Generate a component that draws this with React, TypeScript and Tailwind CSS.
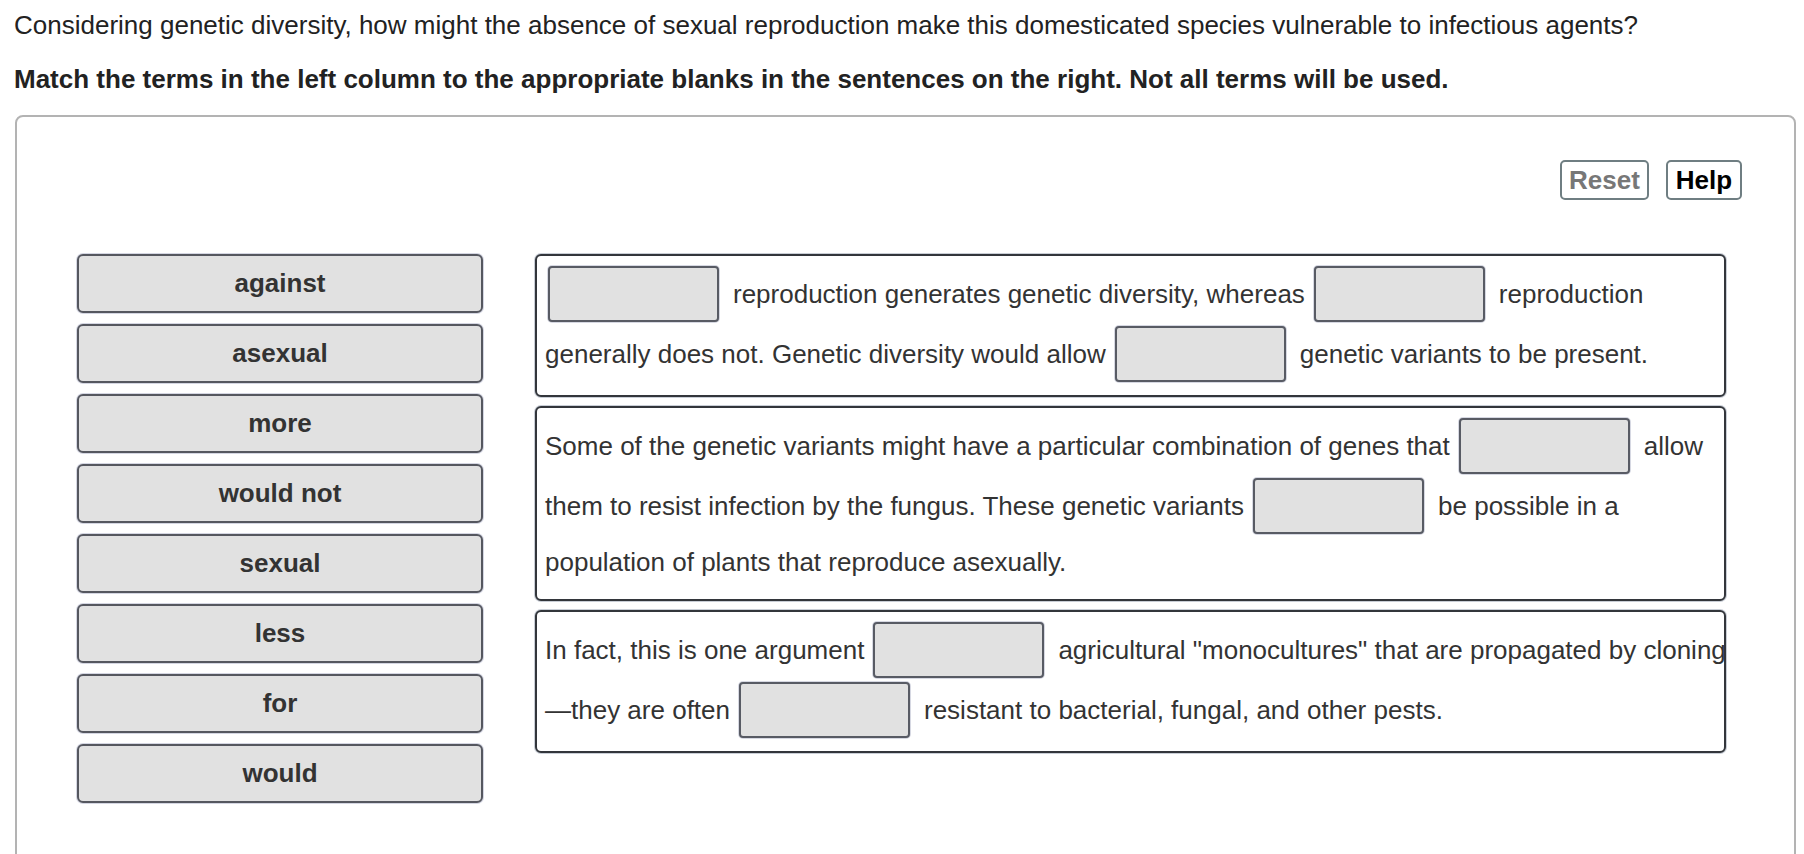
const terms = ["against", "asexual", "more", "would not", "sexual", "less", "for", "would"];

type Part = string | { blank: true };

const B: Part = { blank: true };

const sentences: { lines: Part[][] }[] = [
  {
    lines: [
      [B, "reproduction generates genetic diversity, whereas", B, "reproduction"],
      ["generally does not. Genetic diversity would allow", B, "genetic variants to be present."],
    ],
  },
  {
    lines: [
      ["Some of the genetic variants might have a particular combination of genes that", B, "allow"],
      ["them to resist infection by the fungus. These genetic variants", B, "be possible in a"],
      ["population of plants that reproduce asexually."],
    ],
  },
  {
    lines: [
      ["In fact, this is one argument", B, 'agricultural "monocultures" that are propagated by cloning'],
      ["\u2014they are often", B, "resistant to bacterial, fungal, and other pests."],
    ],
  },
];

function Blank({ first }: { first: boolean }) {
  return (
    <span
      className={`inline-block h-[56px] w-[171px] shrink-0 rounded-[4px] border-2 border-[#585b64] bg-[#e1e1e1] shadow-[0_0_0_1px_#d6d8e2] ${
        first ? "ml-[3px] mr-[14px]" : "ml-[9px] mr-[14px]"
      }`}
    />
  );
}

function SentenceBox({ lines }: { lines: Part[][] }) {
  return (
    <div className="rounded-[6px] border-2 border-[#33363b] bg-white pb-[11px] pl-[8px] pt-[8px] shadow-[0_0_0_1px_#c9ced6]">
      {lines.map((line, i) => {
        const hasBlank = line.some((p) => typeof p !== "string");
        return (
          <div
            key={i}
            className={`flex items-center whitespace-nowrap ${hasBlank ? "h-[60px]" : "h-[52px]"}`}
          >
            {line.map((p, j) =>
              typeof p === "string" ? <span key={j}>{p}</span> : <Blank key={j} first={j === 0} />
            )}
          </div>
        );
      })}
    </div>
  );
}

export default function App() {
  return (
    <div
      className="min-h-screen bg-white pl-[14px] pr-[8px] pt-[10px] text-[26px] text-[#333]"
      style={{ fontFamily: '"Liberation Sans", Arial, Helvetica, sans-serif' }}
    >
      <p className="leading-[30px] text-[#222]">
        Considering genetic diversity, how might the absence of sexual reproduction make this domesticated species
        vulnerable to infectious agents?
      </p>
      <p className="mt-[24px] font-bold leading-[30px] text-[#222]">
        Match the terms in the left column to the appropriate blanks in the sentences on the right. Not all terms will
        be used.
      </p>

      <div className="ml-[1px] mt-[21px] h-[780px] rounded-[8px] border-2 border-[#b3b3b3]">
        <div className="mr-[52px] mt-[43px] flex justify-end gap-[17px]">
          <button
            type="button"
            className="h-[40px] w-[89px] rounded-[5px] border-2 border-[#6f7e82] bg-white text-[26px] font-bold leading-none text-[#777]"
          >
            Reset
          </button>
          <button
            type="button"
            className="h-[40px] w-[76px] rounded-[5px] border-2 border-[#6f7e82] bg-white text-[26px] font-bold leading-none text-black"
          >
            Help
          </button>
        </div>

        <div className="mt-[54px] flex items-start gap-[52px] pl-[60px]">
          <div className="flex w-[406px] flex-col gap-[11px]">
            {terms.map((t) => (
              <div
                key={t}
                className="flex h-[59px] items-center justify-center rounded-[6px] border-2 border-[#55575f] bg-[#e1e1e1] font-bold text-[#333] shadow-[0_0_0_1px_#d4d6e2]"
              >
                {t}
              </div>
            ))}
          </div>

          <div className="flex w-[1191px] flex-col gap-[9px]">
            {sentences.map((s, i) => (
              <SentenceBox key={i} lines={s.lines} />
            ))}
          </div>
        </div>
      </div>
    </div>
  );
}
